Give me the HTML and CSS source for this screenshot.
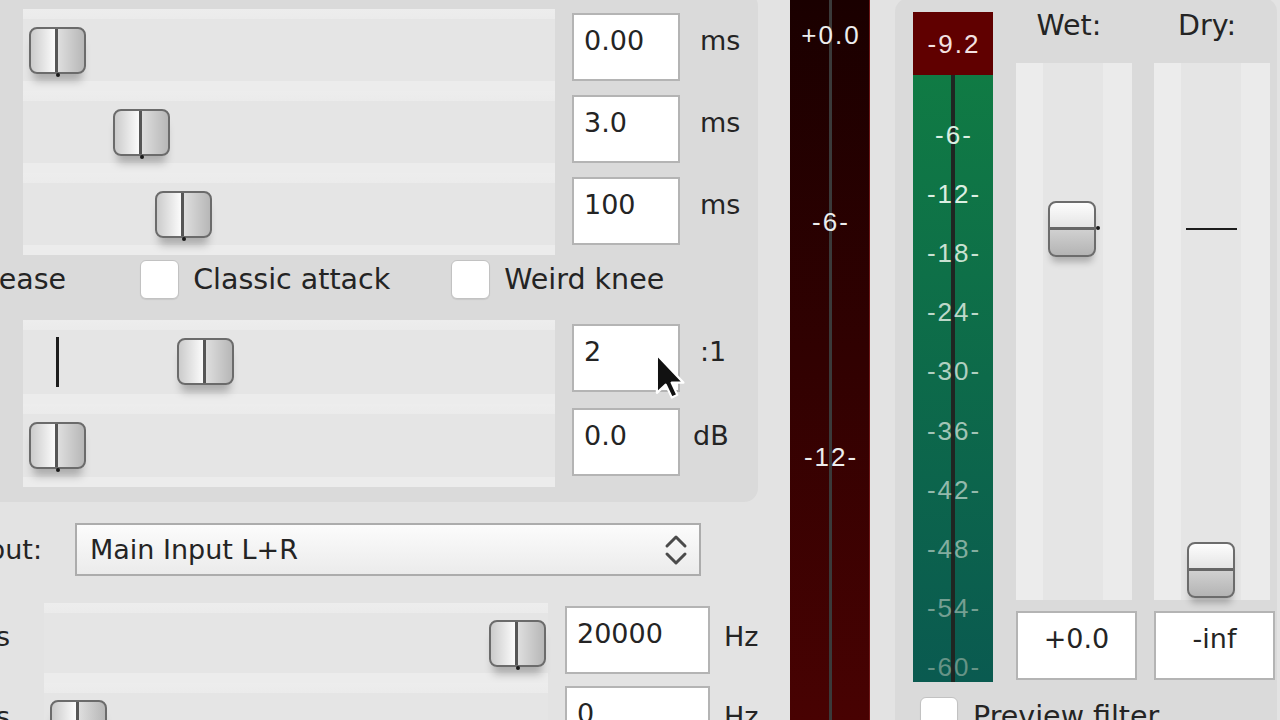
FILE: index.html
```html
<!DOCTYPE html>
<html lang="en">
<head>
    <meta charset="UTF-8">
    <meta name="viewport" content="width=device-width, initial-scale=1.0">
    <title>ReaComp</title>
    <link rel="stylesheet" href="styles.css">
</head>
<body>
    <div class="window">
        <div class="left">
            <div class="group comp">
                <div class="param">
                    <div class="track"><div class="thumb dot" style="margin-left: 6px"></div></div>
                    <div class="field">0.00</div>
                    <div class="unit">ms</div>
                </div>
                <div class="param">
                    <div class="track"><div class="thumb dot" style="margin-left: 90px"></div></div>
                    <div class="field">3.0</div>
                    <div class="unit">ms</div>
                </div>
                <div class="param">
                    <div class="track"><div class="thumb dot" style="margin-left: 132px"></div></div>
                    <div class="field">100</div>
                    <div class="unit">ms</div>
                </div>

                <div class="checks">
                    <label class="check auto-release"><span class="box"></span>Auto release</label>
                    <label class="check classic"><span class="box"></span>Classic attack</label>
                    <label class="check weird"><span class="box"></span>Weird knee</label>
                </div>

                <div class="param tall">
                    <div class="track">
                        <span class="marker"></span>
                        <div class="thumb" style="margin-left: 154px"></div>
                    </div>
                    <div class="field">2</div>
                    <div class="unit">:1</div>
                </div>
                <div class="param tall">
                    <div class="track"><div class="thumb dot" style="margin-left: 6px"></div></div>
                    <div class="field">0.0</div>
                    <div class="unit unit-db">dB</div>
                </div>
            </div>

            <div class="route">
                <span class="route-label">Detector input:</span>
                <div class="select">
                    <span>Main Input L+R</span>
                    <svg width="24" height="36" viewBox="0 0 24 36">
                        <path d="M3 14 L12 5 L21 14 M3 22 L12 31 L21 22" fill="none" stroke="#4b4b4b" stroke-width="3" stroke-linecap="round" stroke-linejoin="round"/>
                    </svg>
                </div>
            </div>

            <div class="filter">
                <div class="fparam">
                    <span class="plabel">Lowpass</span>
                    <div class="track ftrack"><div class="thumb dot" style="margin-left: 445px"></div></div>
                    <div class="field ffield">20000</div>
                    <div class="unit funit">Hz</div>
                </div>
                <div class="fparam">
                    <span class="plabel">Highpass</span>
                    <div class="track ftrack"><div class="thumb dot" style="margin-left: 6px"></div></div>
                    <div class="field ffield">0</div>
                    <div class="unit funit">Hz</div>
                </div>
            </div>
        </div>

        <div class="meter-out">
            <span class="mark" style="top: 22px">+0.0</span>
            <span class="mark" style="top: 209px">-6-</span>
            <span class="mark" style="top: 444px">-12-</span>
        </div>

        <div class="group mix">
            <div class="mix-top">
                <div class="meter-in">
                    <div class="peak">-9.2</div>
                    <div class="scale">
                        <span class="tick">-6-</span>
                        <span class="tick">-12-</span>
                        <span class="tick">-18-</span>
                        <span class="tick">-24-</span>
                        <span class="tick">-30-</span>
                        <span class="tick">-36-</span>
                        <span class="tick">-42-</span>
                        <span class="tick">-48-</span>
                        <span class="tick">-54-</span>
                        <span class="tick">-60-</span>
                    </div>
                </div>
                <div class="mix-cols">
                    <div class="mix-col">
                        <div class="mix-label">Wet:</div>
                        <div class="vtrack">
                            <div class="vthumb dot" style="left: 32px; top: 138px"></div>
                        </div>
                        <div class="vfield">+0.0</div>
                    </div>
                    <div class="mix-col">
                        <div class="mix-label">Dry:</div>
                        <div class="vtrack">
                            <span class="vmarker" style="top: 165px"></span>
                            <div class="vthumb" style="left: 33px; top: 479px"></div>
                        </div>
                        <div class="vfield">-inf</div>
                    </div>
                </div>
            </div>
            <label class="check preview"><span class="box"></span>Preview filter</label>
        </div>
    </div>

    <svg class="cursor" width="33" height="49" viewBox="0 0 24 36">
        <path d="M2 2 L2 30 L8.5 24 L13 33.5 L17 31.5 L12.8 22.5 L21.5 22.5 Z" fill="#111" stroke="#fff" stroke-width="1.6" stroke-linejoin="round"/>
    </svg>
</body>
</html>
```

FILE: styles.css
```css
* {
    box-sizing: border-box;
}

body {
    margin: 0;
    width: 1280px;
    height: 720px;
    overflow: hidden;
    position: relative;
    background-color: #e3e3e3;
    font-family: "DejaVu Sans", Verdana, sans-serif;
    font-size: 27px;
    color: #242424;
}

.window {
    display: flex;
    height: 720px;
    overflow: hidden;
}

.left {
    width: 790px;
    flex-shrink: 0;
}

.group {
    background-color: #dadada;
}

/* compressor box */
.comp {
    width: 758px;
    margin-top: -8px;
    padding: 17px 0 15px 23px;
    border-radius: 0 14px 14px 0;
}

.param {
    display: flex;
    align-items: flex-start;
    height: 82px;
}

.param.tall {
    height: 83.5px;
}

.track {
    position: relative;
    display: flex;
    align-items: center;
    width: 532px;
    height: 100%;
    flex-shrink: 0;
    background: linear-gradient(#ededed 0, #ebebeb 10px, #e5e5e5 10px, #e5e5e5 calc(100% - 10px), #ececec calc(100% - 10px));
}

.thumb {
    position: relative;
    width: 57px;
    height: 47px;
    flex-shrink: 0;
    border: 2px solid #6b6b6b;
    border-radius: 8px;
    background: linear-gradient(90deg, #cbcbcb, #fcfcfc 46%, #565656 46%, #565656 51%, #dedede 51%, #b7b7b7);
    box-shadow: 0 11px 8px -4px rgba(0, 0, 0, 0.25);
}

.thumb.dot::after {
    content: '';
    position: absolute;
    left: 50%;
    bottom: -5px;
    width: 4px;
    height: 4px;
    margin-left: -2px;
    border-radius: 50%;
    background-color: #1a1a1a;
}

.marker {
    position: absolute;
    left: 33px;
    top: 17px;
    width: 3px;
    height: 50px;
    background-color: #1c1c1c;
}

.field {
    width: 108px;
    height: 68px;
    margin: 4px 0 0 17px;
    padding: 12px 0 0 10px;
    line-height: 27px;
    background-color: #fff;
    border: 2px solid #b4b4b4;
    flex-shrink: 0;
}

.unit {
    margin: 4px 0 0 20px;
    padding-top: 14px;
    line-height: 27px;
    white-space: nowrap;
}

.unit-db {
    margin-left: 13px;
}

/* checkbox row */
.checks {
    display: flex;
    align-items: center;
    height: 48px;
    margin-bottom: 17px;
    font-size: 28.5px;
}

.check {
    display: flex;
    align-items: center;
    gap: 14px;
    white-space: nowrap;
}

.auto-release {
    margin-left: -189px;
}

.classic {
    margin-left: 74px;
}

.weird {
    margin-left: 61px;
}

.box {
    width: 39px;
    height: 39px;
    flex-shrink: 0;
    background-color: #fff;
    border: 1px solid #c2c2c2;
    border-radius: 6px;
    box-shadow: 0 1px 1px rgba(0, 0, 0, 0.08);
}

/* detector input */
.route {
    display: flex;
    align-items: center;
    height: 53px;
    margin: 21px 0 0 -300px;
}

.route-label {
    width: 342px;
    flex-shrink: 0;
    text-align: right;
    white-space: nowrap;
}

.select {
    display: flex;
    align-items: center;
    justify-content: space-between;
    width: 626px;
    height: 53px;
    margin-left: 33px;
    padding: 0 11px 0 13px;
    border: 2px solid #acacac;
    background: linear-gradient(#fcfcfc, #ebebeb);
    flex-shrink: 0;
}

/* filter rows */
.filter {
    margin: 27px 0 0 -150px;
}

.fparam {
    display: flex;
    align-items: flex-start;
    height: 80px;
}

.plabel {
    width: 160px;
    padding-top: 20px;
    line-height: 27px;
    text-align: right;
    white-space: nowrap;
    flex-shrink: 0;
}

.ftrack {
    width: 504px;
    margin-left: 34px;
}

.ffield {
    width: 145px;
    margin-top: 3px;
}

.funit {
    margin: 3px 0 0 14px;
    padding-top: 17px;
}

/* output meter */
.meter-out {
    position: relative;
    width: 80px;
    height: 720px;
    flex-shrink: 0;
    background: linear-gradient(#1a0000, #480202);
    box-shadow: inset -1px 0 0 #6e1717;
}

.meter-out::before {
    content: '';
    position: absolute;
    left: 39px;
    top: 0;
    bottom: 0;
    width: 3px;
    background-color: #3a3a3a;
}

.mark,
.peak,
.tick {
    font-family: "Liberation Sans", Arial, sans-serif;
    font-size: 26px;
    letter-spacing: 2px;
    line-height: 26px;
}

.mark {
    position: absolute;
    left: 0;
    right: 0;
    padding-left: 2px;
    text-align: center;
    color: #ededed;
}

/* wet / dry box */
.mix {
    width: 382px;
    height: 740px;
    margin: -2px 0 0 25px;
    padding: 14px 0 0 18px;
    border-radius: 14px;
    flex-shrink: 0;
}

.mix-top {
    display: flex;
    gap: 23px;
}

.meter-in {
    display: flex;
    flex-direction: column;
    width: 80px;
    height: 670px;
}

.peak {
    display: flex;
    align-items: center;
    justify-content: center;
    height: 63px;
    padding-left: 2px;
    background-color: #600000;
    color: #f3e1e1;
}

.scale {
    position: relative;
    display: flex;
    flex-direction: column;
    flex: 1;
    padding-top: 30px;
    overflow: hidden;
    background: linear-gradient(#107b44, #0d6a4a 50%, #0a5a50);
}

.scale::before {
    content: '';
    position: absolute;
    left: 38px;
    top: 0;
    bottom: 0;
    width: 4px;
    background-color: #1f2622;
}

.tick {
    position: relative;
    display: flex;
    align-items: center;
    justify-content: center;
    height: 59.2px;
    flex-shrink: 0;
    padding-left: 2px;
    color: #dcefe2;
}

.tick:nth-child(3) { color: #c9e1d2; }
.tick:nth-child(4) { color: #bdd8c9; }
.tick:nth-child(5) { color: #b0cfc0; }
.tick:nth-child(6) { color: #a2c4b6; }
.tick:nth-child(7) { color: #93b9ab; }
.tick:nth-child(8) { color: #83ad9f; }
.tick:nth-child(9) { color: #749f92; }
.tick:nth-child(10) { color: #669386; }

.mix-cols {
    display: flex;
    gap: 17px;
}

.mix-col {
    width: 121px;
}

.mix-label {
    width: 106px;
    height: 51px;
    line-height: 27px;
    text-align: center;
    font-size: 28.5px;
}

.vtrack {
    position: relative;
    width: 116px;
    height: 537px;
    background: linear-gradient(90deg, #ececec 0, #ececec 27px, #e5e5e5 27px, #e5e5e5 87px, #ebebeb 87px);
}

.vthumb {
    position: absolute;
    width: 48px;
    height: 56px;
    border: 2px solid #6c6c6c;
    border-radius: 8px;
    background: linear-gradient(#fdfdfd, #e4e4e4 47%, #666 47%, #666 52%, #d0d0d0 52%, #b4b4b4);
    box-shadow: 0 8px 7px -3px rgba(0, 0, 0, 0.25);
}

.vthumb.dot::after {
    content: '';
    position: absolute;
    right: -6px;
    top: 50%;
    width: 4px;
    height: 4px;
    margin-top: -3px;
    border-radius: 50%;
    background-color: #1a1a1a;
}

.vmarker {
    position: absolute;
    left: 32px;
    width: 51px;
    height: 2px;
    background-color: #1c1c1c;
}

.vfield {
    width: 121px;
    height: 69px;
    margin-top: 11px;
    padding-top: 12px;
    line-height: 27px;
    text-align: center;
    background-color: #fff;
    border: 2px solid #b4b4b4;
}

.preview {
    margin: 15px 0 0 7px;
    gap: 15px;
    font-size: 28.5px;
}

.preview .box {
    width: 38px;
    height: 38px;
}

.cursor {
    position: absolute;
    left: 654px;
    top: 352px;
}
```
